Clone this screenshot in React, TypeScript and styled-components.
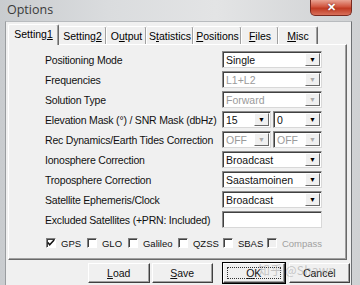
import React from 'react';
import styled, { createGlobalStyle } from 'styled-components';

const GlobalStyle = createGlobalStyle`
  html, body {
    margin: 0;
    padding: 0;
    background: #cfd2d5;
  }
  * { box-sizing: border-box; }
`;

const Frame = styled.div`
  position: relative;
  width: 360px;
  height: 285px;
  overflow: hidden;
  background: linear-gradient(90deg, #c9cccf 0%, #dadcde 30%, #e3e4e5 60%, #cfd1d3 100%);
  font-family: 'Liberation Sans', Arial, sans-serif;
  display: flex;
  flex-direction: column;
`;

const TitleBar = styled.div`
  height: 21px;
  display: flex;
  align-items: flex-start;
  justify-content: space-between;
  padding-left: 7px;
  padding-right: 8px;
`;

const Title = styled.div`
  font-family: 'Open Sans', 'Liberation Sans', sans-serif;
  font-size: 12.5px;
  color: #3a3a3a;
  line-height: 20px;
`;

const CloseBtn = styled.div`
  width: 42px;
  height: 16px;
  border: 1px solid #7a2a20;
  border-top: none;
  border-radius: 0 0 5px 5px;
  background: linear-gradient(180deg, #e9a393 0%, #d0553e 45%, #c03a22 55%, #d8705a 100%);
  display: flex;
  align-items: center;
  justify-content: center;
  color: #fff;
  font-size: 11px;
  font-weight: bold;
  text-shadow: 0 0 2px #6a1a10;
`;

const Client = styled.div`
  flex: 1;
  margin: 0 8px 0 5px;
  background: #f0f0f0;
  border-left: 1px solid #9a9da0;
  border-top: 1px solid #b8bbbe;
  border-right: 1px solid #6d7073;
  display: flex;
  flex-direction: column;
  padding: 1px 1px 0 1px;
`;

const TabStrip = styled.div`
  display: flex;
  align-items: flex-end;
  height: 21px;
  padding-left: 1px;
`;

const Tab = styled.div<{ $active?: boolean; $w: number }>`
  width: ${p => p.$w}px;
  height: ${p => (p.$active ? 21 : 18)}px;
  margin-bottom: ${p => (p.$active ? -1 : 0)}px;
  margin-left: ${p => (p.$active ? 0 : -1)}px;
  background: #f0f0f0;
  border-top: 1px solid #fff;
  border-left: 1px solid #fff;
  border-right: 1px solid #696969;
  box-shadow: inset -1px 0 0 #a0a0a0;
  border-radius: 2px 2px 0 0;
  font-size: 10.5px;
  color: #000;
  display: flex;
  align-items: center;
  justify-content: center;
  position: relative;
  z-index: ${p => (p.$active ? 2 : 1)};
  padding-bottom: ${p => (p.$active ? 2 : 0)}px;
`;

const Panel = styled.div`
  height: 216px;
  margin: 0 3px 0 1px;
  border-top: 1px solid #fff;
  border-left: 1px solid #fff;
  border-right: 1px solid #696969;
  border-bottom: 1px solid #696969;
  box-shadow: inset -1px -1px 0 #a0a0a0;
  padding: 6px 24px 0 36px;
  display: flex;
  flex-direction: column;
  gap: 3px;
`;

const Row = styled.div`
  display: flex;
  align-items: center;
  justify-content: space-between;
  height: 17px;
`;

const Label = styled.div`
  font-size: 10.5px;
  color: #111;
  letter-spacing: -0.2px;
  white-space: nowrap;
`;

const Combos = styled.div`
  display: flex;
  gap: 2px;
  width: 100px;
`;

const Combo = styled.div<{ $disabled?: boolean }>`
  flex: 1;
  height: 17px;
  background: #fff;
  border-top: 1px solid #8a8a8a;
  border-left: 1px solid #8a8a8a;
  border-right: 1px solid #d8d8d8;
  border-bottom: 1px solid #d8d8d8;
  box-shadow: inset 1px 1px 0 #404040;
  display: flex;
  align-items: center;
  font-size: 10.5px;
  color: ${p => (p.$disabled ? '#9a9a9a' : '#111')};
  padding-left: 3px;
  position: relative;
  overflow: hidden;
`;

const ComboText = styled.span`
  flex: 1;
  white-space: nowrap;
`;

const DropBtn = styled.div<{ $disabled?: boolean }>`
  width: 15px;
  height: 13px;
  margin-right: 1px;
  background: #f0f0f0;
  border-top: 1px solid #fff;
  border-left: 1px solid #fff;
  border-right: 1px solid #696969;
  border-bottom: 1px solid #696969;
  display: flex;
  align-items: center;
  justify-content: center;
  color: ${p => (p.$disabled ? '#a8a8a8' : '#000')};
  font-size: 7px;
`;

const TextBox = styled(Combo)`
  flex: none;
  width: 100px;
`;

const CheckRow = styled.div`
  display: flex;
  align-items: center;
  margin-top: 5px;
  margin-left: 1px;
  height: 14px;
`;

const CheckItem = styled.div<{ $disabled?: boolean; $w?: number }>`
  display: flex;
  align-items: center;
  width: ${p => (p.$w ? `${p.$w}px` : 'auto')};
  font-size: 9.5px;
  white-space: nowrap;
  color: ${p => (p.$disabled ? '#a0a0a0' : '#111')};
`;

const Box = styled.div<{ $disabled?: boolean }>`
  width: 10px;
  height: 10px;
  margin-right: 5px;
  flex: none;
  background: ${p => (p.$disabled ? '#f0f0f0' : '#fff')};
  border-top: 1px solid #808080;
  border-left: 1px solid #808080;
  border-right: 1px solid #fff;
  border-bottom: 1px solid #fff;
  box-shadow: inset 1px 1px 0 #404040;
  display: flex;
  align-items: center;
  justify-content: center;
`;

const ButtonBar = styled.div`
  display: flex;
  align-items: center;
  height: 25px;
  padding-left: 81px;
  gap: 2px;
`;

const Button = styled.div<{ $focus?: boolean; $left?: number }>`
  width: 62px;
  height: 20px;
  margin-left: ${p => p.$left ?? 0}px;
  background: #f0f0f0;
  border-top: 1px solid #fff;
  border-left: 1px solid #fff;
  border-right: 1px solid #404040;
  border-bottom: 1px solid #404040;
  box-shadow: inset -1px -1px 0 #a0a0a0;
  outline: ${p => (p.$focus ? '1px solid #000' : 'none')};
  display: flex;
  align-items: center;
  justify-content: center;
  font-size: 10.5px;
  color: #111;
  position: relative;
`;

const FocusRing = styled.div`
  position: absolute;
  inset: 3px;
  border: 1px dotted #333;
`;

const Watermark = styled.div`
  position: absolute;
  left: 258px;
  top: 263px;
  font-family: 'Noto Sans CJK SC', 'Liberation Sans', sans-serif;
  font-size: 12px;
  line-height: 14px;
  color: rgba(150, 150, 150, 0.5);
  letter-spacing: 0.2px;
  pointer-events: none;
`;

const Arrow = () => <span>&#9660;</span>;

const Check = () => (
  <svg width="8" height="8" viewBox="0 0 9 9">
    <path d="M1 4 L3 6.5 L8 1" fill="none" stroke="#111" strokeWidth="1.7" />
  </svg>
);

type ComboSpec = { text: string; disabled?: boolean };

const rows: { label: string; combos?: ComboSpec[]; text?: boolean }[] = [
  { label: 'Positioning Mode', combos: [{ text: 'Single' }] },
  { label: 'Frequencies', combos: [{ text: 'L1+L2', disabled: true }] },
  { label: 'Solution Type', combos: [{ text: 'Forward', disabled: true }] },
  { label: 'Elevation Mask (°) / SNR Mask (dbHz)', combos: [{ text: '15' }, { text: '0' }] },
  { label: 'Rec Dynamics/Earth Tides Correction', combos: [{ text: 'OFF', disabled: true }, { text: 'OFF', disabled: true }] },
  { label: 'Ionosphere Correction', combos: [{ text: 'Broadcast' }] },
  { label: 'Troposphere Correction', combos: [{ text: 'Saastamoinen' }] },
  { label: 'Satellite Ephemeris/Clock', combos: [{ text: 'Broadcast' }] },
  { label: 'Excluded Satellites (+PRN: Included)', text: true },
];

const tabs: { node: React.ReactNode; w: number; active?: boolean }[] = [
  { node: <>Setting<u>1</u></>, w: 51, active: true },
  { node: <>Setting<u>2</u></>, w: 49 },
  { node: <>O<u>u</u>tput</>, w: 41 },
  { node: <>S<u>t</u>atistics</>, w: 48 },
  { node: <><u>P</u>ositions</>, w: 49 },
  { node: <><u>F</u>iles</>, w: 38 },
  { node: <><u>M</u>isc</>, w: 40 },
];

const checks = [
  { label: 'GPS', checked: true, w: 41 },
  { label: 'GLO', w: 41 },
  { label: 'Galileo', w: 50 },
  { label: 'QZSS', w: 45 },
  { label: 'SBAS', w: 44 },
  { label: 'Compass', disabled: true },
];

export default function App() {
  return (
    <>
      <GlobalStyle />
      <Frame>
        <TitleBar>
          <Title>Options</Title>
          <CloseBtn>✕</CloseBtn>
        </TitleBar>
        <Client>
          <TabStrip>
            {tabs.map((t, i) => (
              <Tab key={i} $w={t.w} $active={t.active}>{t.node}</Tab>
            ))}
          </TabStrip>
          <Panel>
            {rows.map(r => (
              <Row key={r.label}>
                <Label>{r.label}</Label>
                {r.text ? (
                  <TextBox />
                ) : (
                  <Combos>
                    {r.combos!.map((c, i) => (
                      <Combo key={i} $disabled={c.disabled}>
                        <ComboText>{c.text}</ComboText>
                        <DropBtn $disabled={c.disabled}><Arrow /></DropBtn>
                      </Combo>
                    ))}
                  </Combos>
                )}
              </Row>
            ))}
            <CheckRow>
              {checks.map(c => (
                <CheckItem key={c.label} $disabled={c.disabled} $w={c.w}>
                  <Box $disabled={c.disabled}>{c.checked && <Check />}</Box>
                  {c.label}
                </CheckItem>
              ))}
            </CheckRow>
          </Panel>
          <ButtonBar>
            <Button><u>L</u>oad</Button>
            <Button><u>S</u>ave</Button>
            <Button $left={8} $focus><FocusRing /><u>O</u>K</Button>
            <Button $left={2}>Cancel</Button>
          </ButtonBar>
        </Client>
        <Watermark>知乎 @Shawn</Watermark>
      </Frame>
    </>
  );
}
